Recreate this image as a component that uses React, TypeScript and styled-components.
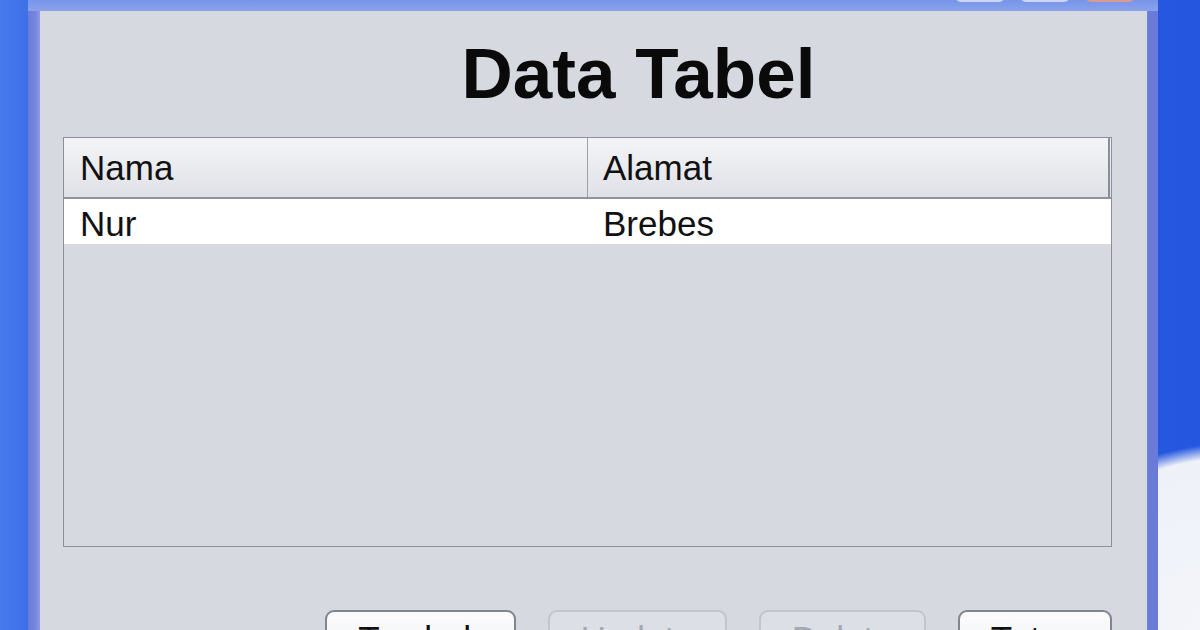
import styled, { createGlobalStyle } from "styled-components";

const GlobalStyle = createGlobalStyle`
  html, body {
    margin: 0;
    padding: 0;
    overflow: hidden;
  }
  body {
    font-family: "Liberation Sans", Arial, sans-serif;
  }
`;

const Desktop = styled.div`
  width: 1200px;
  height: 630px;
  overflow: hidden;
  box-sizing: border-box;
  padding-left: 28px;
  display: flex;
  align-items: flex-start;
  background:
    radial-gradient(300px 210px at 1262px 640px, #f4f6fb 0, #eef1f8 88%, rgba(238, 241, 248, 0) 95%),
    linear-gradient(90deg, #467aec 0, #3d6fe8 28px, #2557e0 1150px, #2456e0 100%);
`;

const Window = styled.div`
  flex: none;
  width: 1130px;
  height: 720px;
  margin-top: -40px;
  display: flex;
  flex-direction: column;
  background: #6d7dd8;
`;

const TitleBar = styled.div`
  height: 51px;
  flex: none;
  display: flex;
  justify-content: flex-end;
  align-items: flex-end;
  gap: 15px;
  padding: 0 23px 9px 0;
  box-sizing: border-box;
  background: linear-gradient(180deg, #3f6fe6 0%, #6f8fe8 70%, #8aa2ec 100%);
`;

const TitleButton = styled.div<{ close?: boolean }>`
  width: 50px;
  height: 40px;
  box-sizing: border-box;
  border: 2px solid ${(p) => (p.close ? "#d79a96" : "#c9d6f8")};
  border-radius: 6px;
  background: ${(p) => (p.close ? "#d8694e" : "#6d8ee8")};
`;

const Frame = styled.div`
  flex: 1;
  display: flex;
  padding: 0 11px 0 12px;
  background: linear-gradient(90deg, #6a7ad8 0, #7888de 8px, #8e9ce6 12px, #6a7ad8 13px, #6878d6 1110px, #8a98e4 1118px, #6a7ad8 1120px);
`;

const Content = styled.div`
  flex: 1;
  display: flex;
  flex-direction: column;
  padding: 0 35px 0 23px;
  background: #d6d9e0;
`;

const Title = styled.h1`
  margin: 0;
  padding: 27px 0 0 102px;
  font-size: 71px;
  line-height: 1;
  font-weight: bold;
  text-align: center;
  color: #0a0a0a;
`;

const Table = styled.div`
  margin-top: 28px;
  height: 410px;
  box-sizing: border-box;
  border: 1px solid #8b9099;
  background: #d6d9e0;
  display: flex;
  flex-direction: column;
`;

const HeaderRow = styled.div`
  display: grid;
  grid-template-columns: 524px 1fr;
  height: 61px;
  box-sizing: border-box;
  border-bottom: 2px solid #8f949c;
  background: linear-gradient(180deg, #f3f4f7 0%, #ebecf0 45%, #dfe1e6 100%);
`;

const HeaderCell = styled.div<{ last?: boolean }>`
  display: flex;
  align-items: center;
  padding-left: ${(p) => (p.last ? 15 : 16)}px;
  border-right: ${(p) => (p.last ? "2px solid #8a8e96" : "1px solid #9ca0a8")};
  margin-right: ${(p) => (p.last ? 1 : 0)}px;
  font-size: 35px;
  line-height: 1;
  color: #111;
`;

const BodyRow = styled.div`
  display: grid;
  grid-template-columns: 524px 1fr;
  height: 45px;
  background: #ffffff;
`;

const Cell = styled.div<{ last?: boolean }>`
  padding: 7px 0 0 ${(p) => (p.last ? 15 : 16)}px;
  font-size: 35px;
  line-height: 1;
  color: #111;
`;

const ButtonRow = styled.div`
  margin-top: 63px;
  display: flex;
  justify-content: flex-end;
  gap: 32px;
`;

const Button = styled.button<{ disabled?: boolean }>`
  height: 64px;
  box-sizing: border-box;
  padding: 9px 31px 0;
  display: flex;
  align-items: flex-start;
  font-family: "Liberation Sans", Arial, sans-serif;
  font-size: 35px;
  line-height: 1;
  border-radius: 9px;
  border: 2px solid ${(p) => (p.disabled ? "#c2c5cc" : "#80858e")};
  background: ${(p) =>
    p.disabled ? "#dcdfe5" : "linear-gradient(180deg, #fbfbfc 0%, #eef0f3 100%)"};
  color: ${(p) => (p.disabled ? "#a4a8b0" : "#111")};
`;

export default function App() {
  return (
    <>
      <GlobalStyle />
      <Desktop>
        <Window>
          <TitleBar>
            <TitleButton />
            <TitleButton />
            <TitleButton close />
          </TitleBar>
          <Frame>
            <Content>
              <Title>Data Tabel</Title>
              <Table>
                <HeaderRow>
                  <HeaderCell>Nama</HeaderCell>
                  <HeaderCell last>Alamat</HeaderCell>
                </HeaderRow>
                <BodyRow>
                  <Cell>Nur</Cell>
                  <Cell last>Brebes</Cell>
                </BodyRow>
              </Table>
              <ButtonRow>
                <Button>Tambah</Button>
                <Button disabled>Update</Button>
                <Button disabled>Delete</Button>
                <Button>Tutup</Button>
              </ButtonRow>
            </Content>
          </Frame>
        </Window>
      </Desktop>
    </>
  );
}
